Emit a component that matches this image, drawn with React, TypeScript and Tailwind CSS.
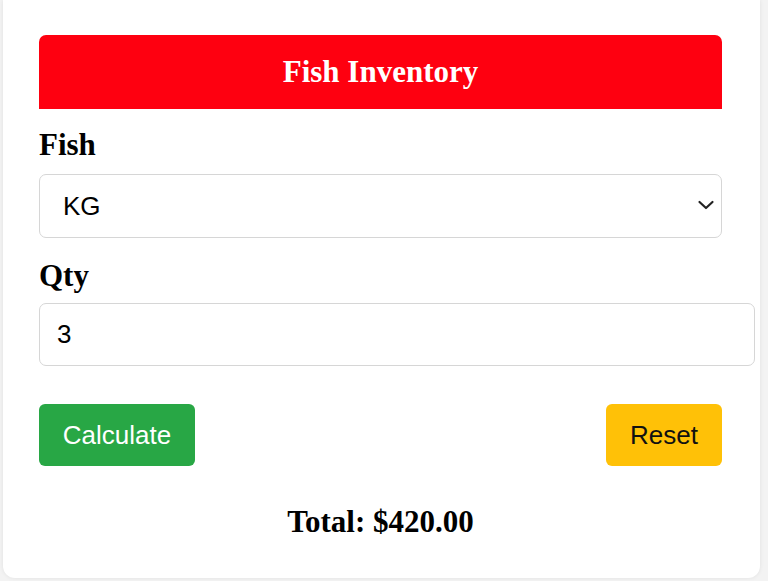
import React from "react";

const serif = "font-['Liberation_Serif','Times_New_Roman',serif]";

export default function App() {
  return (
    <div className="min-h-[581px] w-[768px] bg-[#f3f3f3]">
      <div className="ml-[3px] flex w-[757px] flex-col rounded-b-[12px] bg-white pb-[39px] pl-[36px] pr-[38px] pt-[35px] shadow-[0_0_4px_rgba(0,0,0,0.08)]">
        <div className="flex h-[74px] items-center justify-center rounded-t-[7px] bg-[#fe0010]">
          <h1 className="font-['Liberation_Serif','Times_New_Roman',serif] text-[31px] font-bold leading-[34px] text-white">
            Fish Inventory
          </h1>
        </div>

        <label className="mt-[19px] block font-['Liberation_Serif','Times_New_Roman',serif] text-[31px] font-bold leading-[34px] text-black">
          Fish
        </label>
        <div className="relative mt-[12px] h-[64px] w-full">
          <select
            defaultValue="KG"
            className="h-full w-full appearance-none rounded-[7px] border border-[#d6d6d6] bg-white pl-[23px] font-['Liberation_Sans',Arial,sans-serif] text-[26px] text-black outline-none"
          >
            <option value="KG">KG</option>
          </select>
          <svg
            className="pointer-events-none absolute right-[7px] top-[25px]"
            width="18"
            height="12"
            viewBox="0 0 18 12"
            fill="none"
          >
            <path d="M2.5 3 L9 9 L15.5 3" stroke="#222" strokeWidth="2.2" strokeLinecap="round" strokeLinejoin="round" />
          </svg>
        </div>

        <label className="mt-[21px] block font-['Liberation_Serif','Times_New_Roman',serif] text-[31px] font-bold leading-[34px] text-black">
          Qty
        </label>
        <input
          defaultValue="3"
          className="mt-[10px] block h-[63px] w-[716px] rounded-[7px] border border-[#d6d6d6] bg-white pl-[17px] font-['Liberation_Sans',Arial,sans-serif] text-[26px] text-black outline-none"
        />

        <div className="mt-[38px] flex items-center justify-between">
          <button className="h-[62px] w-[156px] rounded-[6px] bg-[#28a745] font-['Liberation_Sans',Arial,sans-serif] text-[26px] text-white">
            Calculate
          </button>
          <button className="h-[62px] w-[116px] rounded-[6px] bg-[#ffc107] font-['Liberation_Sans',Arial,sans-serif] text-[26px] text-[#111]">
            Reset
          </button>
        </div>

        <p className={`mt-[39px] text-center ${serif} text-[31px] font-bold leading-[34px] text-black`}>
          Total: $420.00
        </p>
      </div>
    </div>
  );
}
